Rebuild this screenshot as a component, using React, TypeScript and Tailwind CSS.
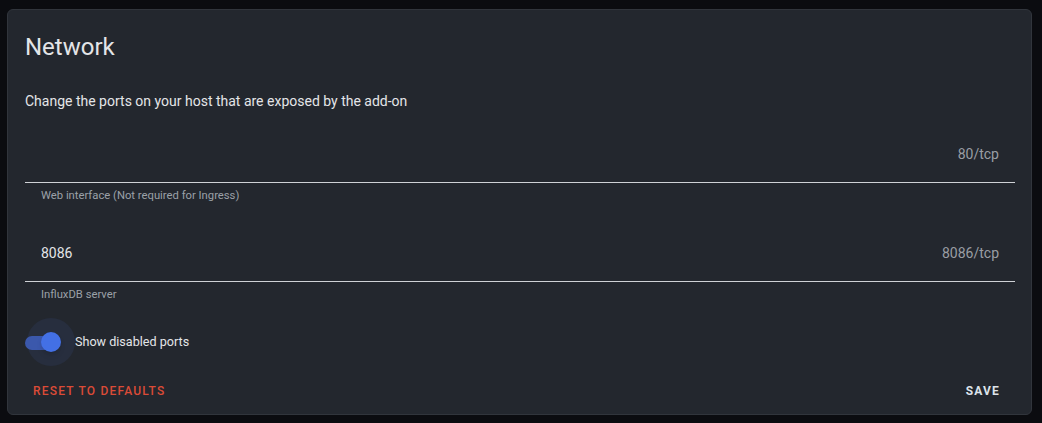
import { useState } from "react"

const ports = [
    { value: "", suffix: "80/tcp", helper: "Web interface (Not required for Ingress)" },
    { value: "8086", suffix: "8086/tcp", helper: "InfluxDB server" },
];

const App = () => {
    const [showDisabled, setShowDisabled] = useState(true);

    return (
        <div className="w-[1042px] h-[423px] bg-[#0b0c10] pl-[7px] pt-[9px] font-['Roboto',sans-serif]">
            <div className="w-[1025px] h-[406px] rounded-[6px] border border-[#31353c] bg-[#23272e] flex flex-col">
                <h1 className="pl-[17px] pt-[21px] text-[24px] leading-[32px] text-[#e3e5e8] font-normal">Network</h1>

                <p className="pl-[17px] mt-[28px] text-[14px] leading-[20px] text-[#e3e5e8]">
                    Change the ports on your host that are exposed by the add-on
                </p>

                <div className="pl-[17px] pr-[16px] mt-[16px] flex flex-col">
                    {ports.map((port, i) => (
                        <div key={port.suffix} className={i > 0 ? "mt-[22px]" : ""}>
                            <div className="h-[56px] flex items-center justify-between px-[16px] border-b border-[#cfd2d6]">
                                <span className="text-[14px] text-[#e3e5e8]">{port.value}</span>
                                <span className="text-[14px] text-[#9a9ea4]">{port.suffix}</span>
                            </div>
                            <div className="px-[16px] mt-[5px] text-[11.25px] leading-[16px] text-[#9ba1a8]">{port.helper}</div>
                        </div>
                    ))}
                </div>

                <div className="pl-[19px] mt-[15px] flex items-center h-[48px]">
                    <button
                        onClick={() => setShowDisabled(!showDisabled)}
                        className="relative w-[48px] h-[48px] shrink-0"
                    >
                        <span className="absolute inset-0 rounded-full bg-[#272e3e]" />
                        <span className={"absolute left-[-2px] top-[18px] w-[35px] h-[14px] rounded-full " + (showDisabled ? "bg-[#3b58ac]" : "bg-[#5f6368]")} />
                        <span className={"absolute top-[14px] w-[20px] h-[20px] rounded-full shadow-md " + (showDisabled ? "left-[14px] bg-[#4370e5]" : "left-[-2px] bg-[#bdbdbd]")} />
                    </button>
                    <span className="text-[12.6px] text-[#e3e5e8]">Show disabled ports</span>
                </div>

                <div className="mt-[16px] pl-[25px] pr-[31px] flex items-center justify-between">
                    <button className="text-[12px] font-medium tracking-[1.2px] text-[#db4b37]">RESET TO DEFAULTS</button>
                    <button className="text-[12px] font-bold tracking-[1.2px] text-[#dde3ea]">SAVE</button>
                </div>
            </div>
        </div>
    )
}

export default App
